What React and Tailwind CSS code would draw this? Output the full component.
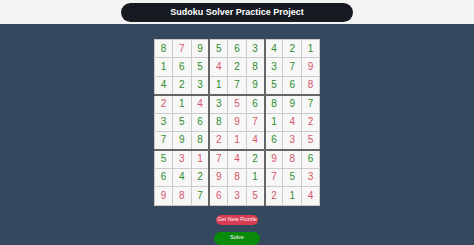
const board = [
  "8g7r9g5g6g3g4g2g1g",
  "1g6g5g4r2g8g3g7g9r",
  "4g2g3g1g7g9g5g6g8r",
  "2r1g4r3g5r6g8g9g7g",
  "3g5g6g8g9r7r1g4r2r",
  "7g9g8g2r1r4r6g3r5r",
  "5g3r1r7r4r2g9r8r6g",
  "6g4g2g9r8r1g7r5g3r",
  "9r8r7g6r3r5r2r1g4r",
].map((row) => row.match(/../g).map((c) => ({ n: c[0], ok: c[1] === "g" })));

const Cell = ({ n, ok, r, c }) => {
  const right = c === 2 || c === 5 ? "border-r-2 border-r-[#666]" : "";
  const bottom = r === 2 || r === 5 ? "border-b-2 border-b-[#666]" : "";
  return (
    <td
      className={`w-[18.4px] h-[18.4px] p-0 text-center align-middle border border-[#cbcbcb] bg-[#f7f7f7] text-[10px] leading-none ${right} ${bottom} ${
        ok ? "text-[#2e8b2e]" : "text-[#d9536a]"
      }`}
    >
      {n}
    </td>
  );
};

export default function App() {
  return (
    <div className="w-[474px] h-[245px] overflow-hidden bg-[#34495e] font-['Liberation_Sans',Arial,sans-serif]">
      <header className="h-6 bg-[#f4f4f4] flex justify-center pt-[3px]">
        <div className="w-[232px] h-[19px] rounded-full bg-[#161b22] flex items-center justify-center text-white font-bold text-[9px]">
          Sudoku Solver Practice Project
        </div>
      </header>

      <main className="flex flex-col items-center pt-[15px]">
        <table className="border-collapse border border-[#888]">
          <tbody>
            {board.map((row, r) => (
              <tr key={r}>
                {row.map((cell, c) => (
                  <Cell key={c} {...cell} r={r} c={c} />
                ))}
              </tr>
            ))}
          </tbody>
        </table>

        <button className="mt-[9px] w-[42px] h-[10px] rounded-full bg-[#d63c52] text-white text-[5.5px] leading-none">
          Get New Puzzle
        </button>
        <button className="mt-[7px] w-[46px] h-[13px] rounded-full bg-[#0a8a0a] text-white text-[5.5px] leading-none">
          Solve
        </button>
      </main>
    </div>
  );
}
